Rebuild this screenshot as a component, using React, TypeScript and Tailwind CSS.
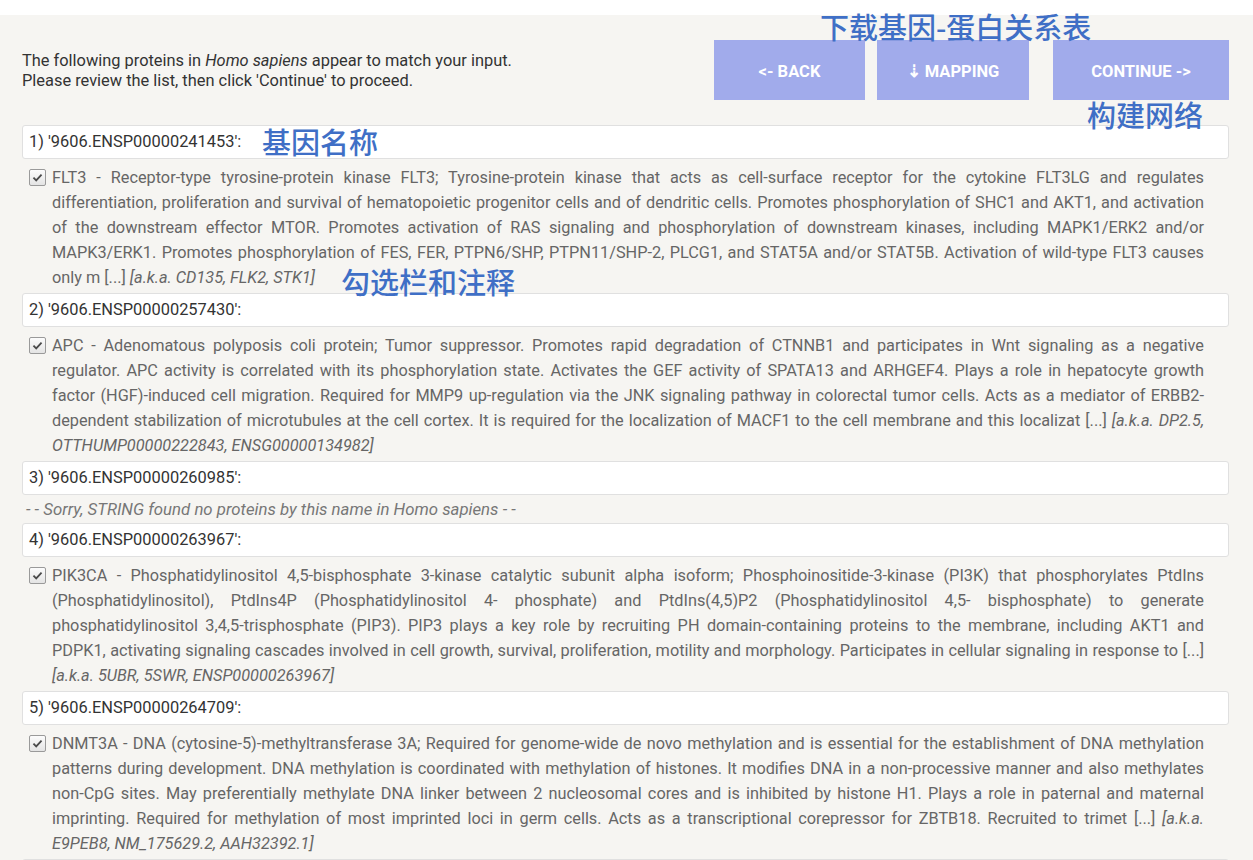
import React from 'react';

interface Entry {
  query: string;
  lines?: React.ReactNode[];
}

const entries: Entry[] = [
  {
    query: "1) '9606.ENSP00000241453':",
    lines: [
      'FLT3 - Receptor-type tyrosine-protein kinase FLT3; Tyrosine-protein kinase that acts as cell-surface receptor for the cytokine FLT3LG and regulates',
      'differentiation, proliferation and survival of hematopoietic progenitor cells and of dendritic cells. Promotes phosphorylation of SHC1 and AKT1, and activation',
      'of the downstream effector MTOR. Promotes activation of RAS signaling and phosphorylation of downstream kinases, including MAPK1/ERK2 and/or',
      'MAPK3/ERK1. Promotes phosphorylation of FES, FER, PTPN6/SHP, PTPN11/SHP-2, PLCG1, and STAT5A and/or STAT5B. Activation of wild-type FLT3 causes',
      <>only m [...] <i>[a.k.a. CD135, FLK2, STK1]</i></>,
    ],
  },
  {
    query: "2) '9606.ENSP00000257430':",
    lines: [
      'APC - Adenomatous polyposis coli protein; Tumor suppressor. Promotes rapid degradation of CTNNB1 and participates in Wnt signaling as a negative',
      'regulator. APC activity is correlated with its phosphorylation state. Activates the GEF activity of SPATA13 and ARHGEF4. Plays a role in hepatocyte growth',
      'factor (HGF)-induced cell migration. Required for MMP9 up-regulation via the JNK signaling pathway in colorectal tumor cells. Acts as a mediator of ERBB2-',
      <>dependent stabilization of microtubules at the cell cortex. It is required for the localization of MACF1 to the cell membrane and this localizat [...] <i>[a.k.a. DP2.5,</i></>,
      <i>OTTHUMP00000222843, ENSG00000134982]</i>,
    ],
  },
  {
    query: "3) '9606.ENSP00000260985':",
  },
  {
    query: "4) '9606.ENSP00000263967':",
    lines: [
      'PIK3CA - Phosphatidylinositol 4,5-bisphosphate 3-kinase catalytic subunit alpha isoform; Phosphoinositide-3-kinase (PI3K) that phosphorylates PtdIns',
      '(Phosphatidylinositol), PtdIns4P (Phosphatidylinositol 4- phosphate) and PtdIns(4,5)P2 (Phosphatidylinositol 4,5- bisphosphate) to generate',
      'phosphatidylinositol 3,4,5-trisphosphate (PIP3). PIP3 plays a key role by recruiting PH domain-containing proteins to the membrane, including AKT1 and',
      'PDPK1, activating signaling cascades involved in cell growth, survival, proliferation, motility and morphology. Participates in cellular signaling in response to [...]',
      <i>[a.k.a. 5UBR, 5SWR, ENSP00000263967]</i>,
    ],
  },
  {
    query: "5) '9606.ENSP00000264709':",
    lines: [
      'DNMT3A - DNA (cytosine-5)-methyltransferase 3A; Required for genome-wide de novo methylation and is essential for the establishment of DNA methylation',
      'patterns during development. DNA methylation is coordinated with methylation of histones. It modifies DNA in a non-processive manner and also methylates',
      'non-CpG sites. May preferentially methylate DNA linker between 2 nucleosomal cores and is inhibited by histone H1. Plays a role in paternal and maternal',
      <>imprinting. Required for methylation of most imprinted loci in germ cells. Acts as a transcriptional corepressor for ZBTB18. Recruited to trimet [...] <i>[a.k.a.</i></>,
      <i>E9PEB8, NM_175629.2, AAH32392.1]</i>,
    ],
  },
  {
    query: "6) '9606.ENSP00000266970':",
  },
];

const CheckBox = () => (
  <span className="mt-[4px] ml-[7px] mr-[6px] flex h-[17px] w-[17px] shrink-0 items-center justify-center rounded-[2px] border border-[#9a9a9a] bg-gradient-to-b from-[#fcfcfc] to-[#e4e4e4]">
    <svg viewBox="0 0 16 16" className="h-[13px] w-[13px]">
      <path d="M3 8.2 L6.4 11.6 L13 4.4" fill="none" stroke="#4a4a4a" strokeWidth="2.2" />
    </svg>
  </span>
);

export default function App() {
  return (
    <div className="min-h-screen bg-white font-['Roboto',sans-serif] text-[16px]">
      <div className="h-[15px] bg-white" />
      <div className="relative bg-[#f6f5f2] pb-10 pl-[22px] pr-[24px]">
        {/* top bar */}
        <div className="flex items-start justify-between pt-[25px]">
          <div className="pt-[11px] text-[16.4px] leading-[20px] text-[#333]">
            The following proteins in <i>Homo sapiens</i> appear to match your input.
            <br />
            Please review the list, then click 'Continue' to proceed.
          </div>
          <div className="flex gap-[12px]">
            <button className="h-[60px] w-[151px] bg-[#a1abeb] pt-[4px] text-[16.5px] font-bold text-white">&lt;- BACK</button>
            <button className="h-[60px] w-[152px] bg-[#a1abeb] pt-[4px] text-[16.5px] font-bold text-white">⇣ MAPPING</button>
            <button className="ml-[12px] h-[60px] w-[176px] bg-[#a1abeb] pt-[4px] text-[16.5px] font-bold text-white">CONTINUE -&gt;</button>
          </div>
        </div>

        <div className="mt-[25px] flex flex-col">
          {entries.map((e, i) => (
            <div key={i} className="flex flex-col">
              <div className="flex h-[34px] items-center rounded-[3px] border border-[#e0e0e0] bg-white pl-[6px] text-[16.4px] text-[#333]">
                {e.query}
              </div>
              {e.lines ? (
                <div className="mb-[3px] mt-[6px] flex pr-[25px] text-[16.3px] leading-[25px] text-[#666]">
                  <CheckBox />
                  <div className="flex-1">
                    {e.lines.map((l, j) => (
                      <div
                        key={j}
                        className={j < e.lines!.length - 1 ? 'whitespace-nowrap text-justify [text-align-last:justify]' : 'whitespace-nowrap'}
                      >
                        {l}
                      </div>
                    ))}
                  </div>
                </div>
              ) : (
                <div className="my-[2px] pl-[4px] text-[16.8px] leading-[24px] text-[#777] italic">
                  - - Sorry, STRING found no proteins by this name in Homo sapiens - -
                </div>
              )}
            </div>
          ))}
        </div>

        {/* annotations */}
        <span className="absolute left-[820px] top-[-9px] font-['Noto_Sans_CJK_SC',sans-serif] text-[29px] font-medium leading-[40px] text-[#3f6fc6]">
          下载基因-蛋白关系表
        </span>
        <span className="absolute left-[1087px] top-[79px] font-['Noto_Sans_CJK_SC',sans-serif] text-[29px] font-medium leading-[40px] text-[#3f6fc6]">
          构建网络
        </span>
        <span className="absolute left-[262px] top-[106px] font-['Noto_Sans_CJK_SC',sans-serif] text-[29px] font-medium leading-[40px] text-[#3f6fc6]">
          基因名称
        </span>
        <span className="absolute left-[341px] top-[246px] font-['Noto_Sans_CJK_SC',sans-serif] text-[29px] font-medium leading-[40px] text-[#3f6fc6]">
          勾选栏和注释
        </span>
      </div>
    </div>
  );
}
